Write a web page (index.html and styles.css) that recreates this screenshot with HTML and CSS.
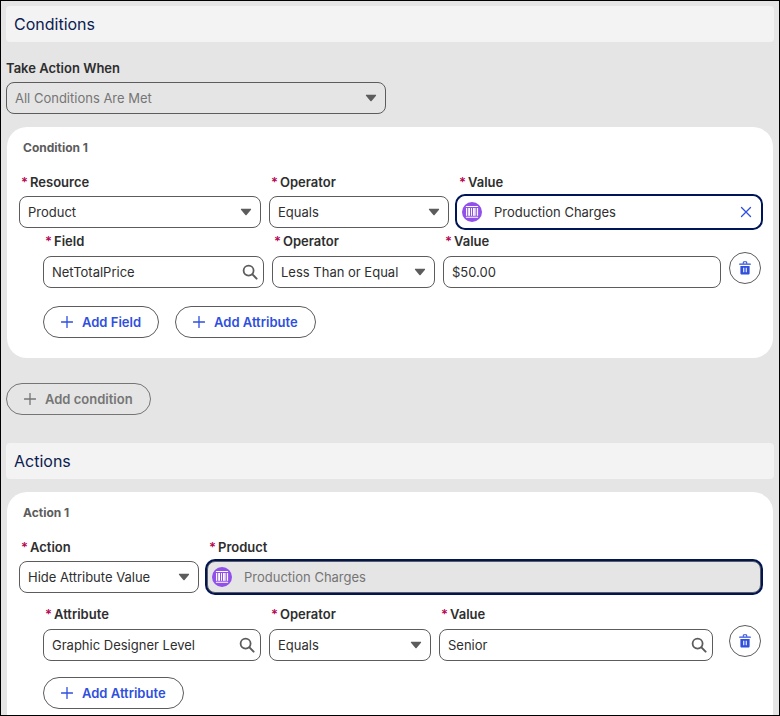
FILE: index.html
```html
<!DOCTYPE html>
<html lang="en">
<head>
<meta charset="utf-8">
<meta name="viewport" content="width=device-width, initial-scale=1">
<title>Rule Builder</title>
<link rel="stylesheet" href="styles.css">
</head>
<body>
<svg class="sprite" aria-hidden="true">
  <symbol id="plus" viewBox="0 0 12 12"><path d="M6 0.5v11M0.5 6h11" fill="none" stroke="currentColor" stroke-width="1.3" stroke-linecap="round"/></symbol>
  <symbol id="down" viewBox="0 0 12 8"><path d="M1.4 0.8h9.2c.5 0 .7.5.4.9L6.6 6.9c-.3.4-.9.4-1.2 0L1 1.7c-.3-.4-.1-.9.4-.9z" fill="currentColor"/></symbol>
  <symbol id="search" viewBox="0 0 16 16"><circle cx="6.6" cy="6.6" r="5" fill="none" stroke="currentColor" stroke-width="1.8"/><path d="M10.4 10.4l4.2 4.2" stroke="currentColor" stroke-width="2" stroke-linecap="round"/></symbol>
  <symbol id="close" viewBox="0 0 12 12"><path d="M1.5 1.5l9 9M10.5 1.5l-9 9" fill="none" stroke="currentColor" stroke-width="1.3" stroke-linecap="round"/></symbol>
  <symbol id="trash" viewBox="0 0 14 14"><path d="M1.7 3.2h10.6" stroke="currentColor" stroke-width="1.2" stroke-linecap="round"/><path d="M5.3 2.8V1.6c0-.6.4-.9.9-.9h1.6c.5 0 .9.3.9.9v1.2" fill="none" stroke="currentColor" stroke-width="1.1"/><path fill-rule="evenodd" fill="currentColor" d="M2.4 4.9h9.2v7.3c0 .8-.5 1.3-1.3 1.3H3.7c-.8 0-1.3-.5-1.3-1.3zM5.2 6.8v4.4h1.1V6.8zM7.7 6.8v4.4h1.1V6.8z"/></symbol>
  <symbol id="product" viewBox="0 0 20 20"><circle cx="10" cy="10" r="10" fill="#9050e9"/><g fill="#fff"><rect x="3.8" y="4" width="12.4" height="1.1" rx=".5"/><rect x="3.8" y="14.7" width="12.4" height="1.1" rx=".5"/><rect x="4" y="6" width="1.2" height="7.8"/><rect x="6.2" y="6" width="1.8" height="7.8"/><rect x="9" y="6" width="1" height="7.8"/><rect x="11" y="6" width="1.8" height="7.8"/><rect x="13.4" y="6" width=".8" height="7.8"/><rect x="15" y="6" width="1.1" height="7.8"/></g></symbol>
</svg>

<main class="builder">
  <h2 class="section-title">Conditions</h2>
  <div class="field when">
    <label for="when">Take Action When</label>
    <div class="control">
      <select id="when" disabled><option>All Conditions Are Met</option></select>
      <svg class="arrow"><use href="#down"/></svg>
    </div>
  </div>

  <section class="card">
    <h3 class="card-title">Condition 1</h3>
    <div class="row condition-row">
      <div class="field">
        <label for="resource"><abbr>*</abbr>Resource</label>
        <div class="control">
          <select id="resource"><option>Product</option></select>
          <svg class="arrow"><use href="#down"/></svg>
        </div>
      </div>
      <div class="field">
        <label for="operator"><abbr>*</abbr>Operator</label>
        <div class="control">
          <select id="operator"><option>Equals</option></select>
          <svg class="arrow"><use href="#down"/></svg>
        </div>
      </div>
      <div class="field">
        <label for="value"><abbr>*</abbr>Value</label>
        <div class="control">
          <input class="lookup selected" id="value" type="text" value="Production Charges">
          <svg class="entity"><use href="#product"/></svg>
          <button class="clear" type="button" aria-label="Clear"><svg><use href="#close"/></svg></button>
        </div>
      </div>
    </div>
    <div class="nested">
      <div class="row filter-row">
        <div class="field">
          <label for="field"><abbr>*</abbr>Field</label>
          <div class="control">
            <input id="field" type="text" value="NetTotalPrice">
            <svg class="magnifier"><use href="#search"/></svg>
          </div>
        </div>
        <div class="field">
          <label for="field-operator"><abbr>*</abbr>Operator</label>
          <div class="control">
            <select id="field-operator"><option>Less Than or Equal</option></select>
            <svg class="arrow"><use href="#down"/></svg>
          </div>
        </div>
        <div class="field">
          <label for="field-value"><abbr>*</abbr>Value</label>
          <div class="control"><input id="field-value" type="text" value="$50.00"></div>
        </div>
        <button class="delete" type="button" aria-label="Delete"><svg><use href="#trash"/></svg></button>
      </div>
      <div class="actions">
        <button class="pill" type="button"><svg><use href="#plus"/></svg>Add Field</button>
        <button class="pill" type="button"><svg><use href="#plus"/></svg>Add Attribute</button>
      </div>
    </div>
  </section>

  <button class="pill add-condition" type="button" disabled><svg><use href="#plus"/></svg>Add condition</button>

  <h2 class="section-title">Actions</h2>
  <section class="card card-last">
    <h3 class="card-title">Action 1</h3>
    <div class="row action-row">
      <div class="field">
        <label for="action"><abbr>*</abbr>Action</label>
        <div class="control">
          <select id="action"><option>Hide Attribute Value</option></select>
          <svg class="arrow"><use href="#down"/></svg>
        </div>
      </div>
      <div class="field">
        <label for="product-name"><abbr>*</abbr>Product</label>
        <div class="control">
          <input class="lookup" id="product-name" type="text" value="Production Charges" disabled>
          <svg class="entity"><use href="#product"/></svg>
        </div>
      </div>
    </div>
    <div class="nested">
      <div class="row attribute-row">
        <div class="field">
          <label for="attribute"><abbr>*</abbr>Attribute</label>
          <div class="control">
            <input id="attribute" type="text" value="Graphic Designer Level">
            <svg class="magnifier"><use href="#search"/></svg>
          </div>
        </div>
        <div class="field">
          <label for="attribute-operator"><abbr>*</abbr>Operator</label>
          <div class="control">
            <select id="attribute-operator"><option>Equals</option></select>
            <svg class="arrow"><use href="#down"/></svg>
          </div>
        </div>
        <div class="field">
          <label for="attribute-value"><abbr>*</abbr>Value</label>
          <div class="control">
            <input id="attribute-value" type="text" value="Senior">
            <svg class="magnifier"><use href="#search"/></svg>
          </div>
        </div>
        <button class="delete" type="button" aria-label="Delete"><svg><use href="#trash"/></svg></button>
      </div>
      <div class="actions">
        <button class="pill" type="button"><svg><use href="#plus"/></svg>Add Attribute</button>
      </div>
    </div>
  </section>
</main>
</body>
</html>
```
FILE: styles.css
```css
* {
  box-sizing: border-box;
}

body {
  margin: 0;
  font: 13px/16px Inter, "Liberation Sans", sans-serif;
  color: #2e2e2e;
}

h2,
h3 {
  margin: 0;
}

svg {
  display: block;
}

.sprite {
  position: absolute;
  width: 0;
  height: 0;
}

.builder {
  display: flex;
  flex-direction: column;
  min-height: 100vh;
  padding: 5px 5px 0;
  border: 1px solid #000;
  background: #e5e5e5;
}

.section-title {
  padding: 0 8px;
  border-radius: 4px;
  background: #f3f3f3;
  color: #0b2050;
  font-size: 16px;
  font-weight: 400;
  line-height: 36px;
}

/* Cards */
.card {
  margin: 13px 1px 0;
  padding: 13px 12px 20px;
  border-radius: 20px;
  background: #fff;
}

.card-last {
  flex: 1;
  padding-bottom: 6px;
  border-radius: 20px 20px 0 0;
}

.card-title {
  margin: 0 4px 18px;
  color: #5c5c5c;
  font-size: 12px;
  font-weight: 700;
  line-height: 16px;
}

/* Rows */
.row {
  display: grid;
  gap: 8px;
}

.condition-row {
  grid-template-columns: 242fr 180fr 304fr;
}

.action-row {
  grid-template-columns: 180fr 554fr;
}

.filter-row {
  grid-template-columns: 221fr 163fr 278fr 32px;
}

.attribute-row {
  grid-template-columns: 218fr 162fr 274fr 40px;
}

.nested {
  margin-top: 5px;
  padding-left: 24px;
}

.card-last .nested {
  margin-top: 13px;
}

/* Fields */
.field {
  display: flex;
  flex-direction: column;
  gap: 6px;
  min-width: 0;
}

.nested .field {
  gap: 7px;
}

.when {
  width: 50%;
  min-width: 240px;
  max-width: 380px;
  margin-top: 18px;
}

label {
  font-weight: 600;
}

.row label {
  padding-left: 2px;
}

abbr {
  margin-right: 2px;
  color: #b60554;
}

.control {
  position: relative;
}

input,
select {
  display: block;
  width: 100%;
  height: 32px;
  margin: 0;
  padding: 0 8px;
  border: 1px solid #5c5c5c;
  border-radius: 8px;
  background: #fff;
  color: #2e2e2e;
  font: inherit;
  appearance: none;
}

input:disabled,
select:disabled {
  background: #e5e5e5;
  color: #757575;
  opacity: 1;
}

.lookup {
  padding: 0 32px 0 36px;
  box-shadow: 0 0 0 2px #001557;
}

.selected {
  border-color: #fff;
}

.arrow,
.magnifier,
.entity,
.clear {
  position: absolute;
  top: 50%;
  transform: translateY(-50%);
}

.arrow {
  right: 9px;
  width: 12px;
  height: 8px;
  color: #5c5c5c;
  pointer-events: none;
}

.magnifier {
  right: 6px;
  width: 16px;
  height: 16px;
  color: #5c5c5c;
}

.entity {
  left: 5px;
  width: 20px;
  height: 20px;
}

/* Buttons */
button {
  border: 0;
  background: transparent;
  color: #2f4fdd;
  font: inherit;
}

.clear {
  right: 7px;
  padding: 2px;
}

.clear svg {
  width: 12px;
  height: 12px;
}

.delete {
  display: grid;
  place-items: center;
  justify-self: end;
  width: 32px;
  height: 32px;
  margin-top: 19px;
  padding: 0;
  border: 1px solid #5c5c5c;
  border-radius: 50%;
}

.delete svg {
  width: 14px;
  height: 14px;
}

.actions {
  display: flex;
  gap: 16px;
  margin-top: 18px;
}

.card-last .actions {
  margin-top: 16px;
}

.pill {
  display: flex;
  align-items: center;
  gap: 9px;
  height: 32px;
  padding: 0 17px;
  border: 1px solid #5c5c5c;
  border-radius: 16px;
  font-weight: 600;
}

.pill svg {
  width: 12px;
  height: 12px;
}

.pill:disabled {
  border-color: #757575;
  color: #757575;
}

.add-condition {
  align-self: flex-start;
  margin: 25px 0 28px;
}
```
